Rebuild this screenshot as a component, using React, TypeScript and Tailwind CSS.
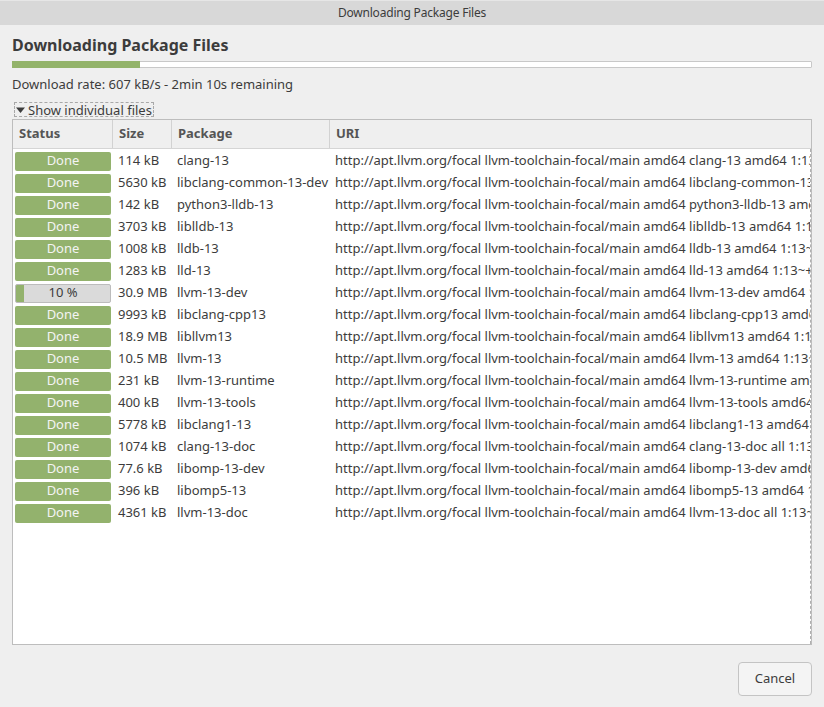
import React from "react";

const rows: [string, string, string, string][] = [
  ["done", "114 kB", "clang-13", "amd64 1:13~++20211015"],
  ["done", "5630 kB", "libclang-common-13-dev", "amd64 1:13~++20211015"],
  ["done", "142 kB", "python3-lldb-13", "amd64 1:13~++20211015"],
  ["done", "3703 kB", "liblldb-13", "amd64 1:13~++20211015"],
  ["done", "1008 kB", "lldb-13", "amd64 1:13~++20211015"],
  ["done", "1283 kB", "lld-13", "amd64 1:13~++20211015"],
  ["10", "30.9 MB", "llvm-13-dev", "amd64 1:13~++20211015"],
  ["done", "9993 kB", "libclang-cpp13", "amd64 1:13~++20211015"],
  ["done", "18.9 MB", "libllvm13", "amd64 1:13~++20211015"],
  ["done", "10.5 MB", "llvm-13", "amd64 1:13~++20211015"],
  ["done", "231 kB", "llvm-13-runtime", "amd64 1:13~++20211015"],
  ["done", "400 kB", "llvm-13-tools", "amd64 1:13~++20211015"],
  ["done", "5778 kB", "libclang1-13", "amd64 1:13~++20211015"],
  ["done", "1074 kB", "clang-13-doc", "all 1:13~++20211015"],
  ["done", "77.6 kB", "libomp-13-dev", "amd64 1:13~++20211015"],
  ["done", "396 kB", "libomp5-13", "amd64 1:13~++20211015"],
  ["done", "4361 kB", "llvm-13-doc", "all 1:13~++20211015"],
];

export default function App() {
  return (
    <div
      className="w-[824px] h-[707px] bg-[#efefef] text-[#3c3c3c] flex flex-col overflow-hidden"
      style={{ fontFamily: '"Noto Sans", "Open Sans", sans-serif' }}
    >
      <div className="h-[25px] bg-[#d8d8d8] border-t border-[#e6e6e6] flex items-center justify-center text-[12px] text-[#3c3c3c] tracking-[-0.2px]">
        Downloading Package Files
      </div>
      <div className="flex flex-col px-[12px] flex-1">
        <div className="mt-[9px] text-[16px] font-bold leading-[22px] text-[#3c3c3c]">
          Downloading Package Files
        </div>
        <div className="mt-[5px] h-[7px] w-[800px] border border-[#c8c8c8] bg-white rounded-[1px] flex">
          <div className="w-[128px] bg-[#93b36a] -my-px -ml-px" />
        </div>
        <div className="mt-[7px] text-[13px] leading-[18px]">
          Download rate: 607 kB/s - 2min 10s remaining
        </div>
        <div className="mt-[9px] flex items-center self-start ml-[2px] h-[15px] pr-[1px] border border-dashed border-[#a8a8a8] text-[13px] whitespace-nowrap">
          <svg width="10" height="8" viewBox="0 0 10 8" className="ml-[1px] mr-[2px]">
            <polygon points="0,1.5 9,1.5 4.5,7" fill="#3c3c3c" />
          </svg>
          <span className="leading-[14px]">Show individual files</span>
        </div>
        <div className="mt-[2px] w-[800px] h-[526px] border border-[#bdbdbd] bg-white flex flex-col text-[13px] relative">
          <div className="h-[29px] flex bg-[#efefef] border-b border-[#d5d5d5] font-bold text-[#555555] text-[13px]">
            <div className="w-[100px] border-r border-[#d2d2d2] flex items-center pl-[6px]">Status</div>
            <div className="w-[59px] border-r border-[#d2d2d2] flex items-center pl-[6px]">Size</div>
            <div className="w-[158px] border-r border-[#d2d2d2] flex items-center pl-[6px]">Package</div>
            <div className="flex-1 flex items-center pl-[6px]">URI</div>
          </div>
          <div className="flex flex-col mt-[1px]">
            {rows.map(([st, size, pkg, tail], i) => (
              <div key={i} className="h-[22px] flex items-center">
                <div className="w-[100px] pl-[2px] flex items-center">
                  {st === "done" ? (
                    <div className="w-[96px] h-[19px] rounded-[2px] bg-[#93b26d] text-[#f4f4f4] flex items-center justify-center text-[13px]">
                      Done
                    </div>
                  ) : (
                    <div className="w-[96px] h-[19px] rounded-[2px] bg-[#dadada] border border-[#bcbcbc] relative flex items-center justify-center text-[13px] text-[#3c3c3c] overflow-hidden">
                      <div className="absolute left-0 top-0 bottom-0 w-[8px] bg-[#93b26d]" />
                      <span className="relative">10 %</span>
                    </div>
                  )}
                </div>
                <div className="w-[59px] pl-[5px] whitespace-nowrap">{size}</div>
                <div className="w-[158px] pl-[5px] whitespace-nowrap overflow-hidden">{pkg}</div>
                <div className="flex-1 pl-[5px] whitespace-nowrap overflow-hidden">
                  http://apt.llvm.org/focal llvm-toolchain-focal/main amd64 {pkg} {tail}
                </div>
                <div className="w-[1px]" />
              </div>
            ))}
          </div>
          <div className="absolute right-0 top-[29px] bottom-0 w-0 border-r border-dashed border-[#b0b0b0]" />
        </div>
        <div className="flex justify-end mt-[17px]">
          <button className="w-[74px] h-[34px] rounded-[4px] border border-[#c4c4c4] bg-[#f4f4f4] text-[13px] text-[#3c3c3c]">
            Cancel
          </button>
        </div>
      </div>
    </div>
  );
}
